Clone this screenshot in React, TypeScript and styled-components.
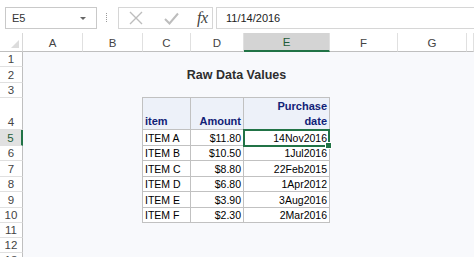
import React from 'react';
import styled, { createGlobalStyle, css } from 'styled-components';

const Global = createGlobalStyle`
  html, body { margin: 0; padding: 0; background: #ffffff; }
  body { font-family: "Liberation Sans", Arial, sans-serif; }
`;

const Window = styled.div`
  display: flex;
  flex-direction: column;
  width: 474px;
  height: 257px;
  overflow: hidden;
  background: #ffffff;
`;

/* ---------- formula bar ---------- */
const FormulaBar = styled.div`
  display: flex;
  align-items: flex-start;
  height: 33px;
  flex: none;
  box-sizing: border-box;
  padding: 7px 0 0 5px;
`;

const NameBox = styled.div`
  width: 92px;
  height: 22px;
  box-sizing: border-box;
  border: 1px solid #c9c9c9;
  display: flex;
  align-items: center;
  justify-content: space-between;
  padding: 0 10px 0 6px;
  font-size: 11px;
  color: #333;
`;

const DropArrow = styled.span`
  width: 0;
  height: 0;
  border-left: 3px solid transparent;
  border-right: 3px solid transparent;
  border-top: 3px solid #666;
`;

const Grip = styled.span`
  width: 0;
  height: 9px;
  margin: 6px 0 0 9px;
  border-left: 1px dotted #9a9a9a;
`;

const FxButtons = styled.div`
  width: 95px;
  height: 22px;
  box-sizing: border-box;
  margin-left: 11px;
  border: 1px solid #d6d6d6;
  display: flex;
  align-items: center;
  padding-left: 10px;
  gap: 0;
`;

const IconSlot = styled.span`
  width: 35px;
  display: flex;
  align-items: center;
  justify-content: flex-start;
`;

const FxLabel = styled.span`
  font-family: "Liberation Serif", "Times New Roman", serif;
  font-style: italic;
  font-size: 16px;
  color: #3f3f3f;
  letter-spacing: -0.5px;
  margin-left: -2px;
`;

const FormulaInput = styled.div`
  flex: 1;
  height: 22px;
  box-sizing: border-box;
  margin-left: 3px;
  border: 1px solid #d6d6d6;
  border-right: none;
  display: flex;
  align-items: center;
  padding-left: 9px;
  font-size: 11px;
  color: #222;
`;

/* ---------- sheet ---------- */
const rowHeights = [19, 15, 16, 15, 32, 16, 15, 16, 15, 16, 15, 15, 15, 15];

const Sheet = styled.div`
  flex: 1;
  display: grid;
  grid-template-columns: 23px 60px 60px 48px 53px 86px 68px 69px 1fr;
  grid-template-rows: ${rowHeights.map((h) => `${h}px`).join(' ')};
  background: #f8f9fc;
  overflow: hidden;
`;

const Corner = styled.div`
  grid-column: 1;
  grid-row: 1;
  background: #fff;
  border-bottom: 1px solid #bfbfbf;
  border-right: 1px solid #d8d8d8;
  display: flex;
  align-items: flex-end;
  justify-content: flex-end;
  padding: 0 3px 3px 0;
`;

const CornerTri = styled.span`
  width: 0;
  height: 0;
  border-left: 8px solid transparent;
  border-bottom: 8px solid #dcdcdc;
`;

const ColHeader = styled.div<{ $col: number; $active?: boolean }>`
  grid-column: ${(p) => p.$col};
  grid-row: 1;
  background: #fff;
  border-bottom: 1px solid #bfbfbf;
  border-right: 1px solid #e0e0e0;
  display: flex;
  align-items: center;
  justify-content: center;
  padding-top: 1px;
  font-size: 11.5px;
  color: #444;
  ${(p) =>
    p.$active &&
    css`
      background: #d4d4d4;
      border-bottom: 2px solid #217346;
      color: #1f5d3a;
    `}
`;

const RowHeader = styled.div<{ $row: number; $active?: boolean }>`
  grid-column: 1;
  grid-row: ${(p) => p.$row};
  background: #fff;
  border-right: 1px solid #bfbfbf;
  border-bottom: 1px solid #e0e0e0;
  display: flex;
  align-items: flex-end;
  justify-content: center;
  font-size: 11.5px;
  line-height: 14px;
  color: #444;
  ${(p) =>
    p.$active &&
    css`
      background: #e1e1e1;
      border-right: 2px solid #217346;
      color: #1f5d3a;
    `}
`;

const Title = styled.div`
  grid-column: 4 / 7;
  grid-row: 3;
  display: flex;
  align-items: center;
  justify-content: center;
  font-weight: bold;
  font-size: 12.5px;
  color: #2e2e2e;
`;

const DataTable = styled.div`
  grid-column: 4 / 7;
  grid-row: 5 / 12;
  display: grid;
  grid-template-columns: 48px 53px 86px;
  grid-template-rows: 32px 16px 15px 16px 15px 16px 15px;
  border-top: 1px solid #c1c1c1;
  border-left: 1px solid #c1c1c1;
  margin: -1px 0 0 -1px;
`;

const Cell = styled.div<{ $head?: boolean; $align?: 'left' | 'right' }>`
  border-right: 1px solid #c1c1c1;
  border-bottom: 1px solid #c1c1c1;
  display: flex;
  align-items: center;
  justify-content: ${(p) => (p.$align === 'right' ? 'flex-end' : 'flex-start')};
  text-align: ${(p) => p.$align ?? 'left'};
  padding: 0 2px;
  font-size: 10.5px;
  color: #000;
  background: #fff;
  white-space: nowrap;
  ${(p) =>
    p.$head &&
    css`
      align-items: flex-end;
      background: #edf1f9;
      color: #112277;
      font-weight: bold;
      font-size: 11px;
      line-height: 15px;
      padding-bottom: 0;
    `}
`;

const Selection = styled.div`
  grid-column: 6;
  grid-row: 6;
  position: relative;
  z-index: 2;
  margin: -1px 0 -1px -1px;
  border: 2px solid #217346;
`;

const FillHandle = styled.span`
  position: absolute;
  right: -4px;
  bottom: -4px;
  width: 5px;
  height: 5px;
  background: #217346;
  border: 1px solid #fff;
`;

const columns = ['A', 'B', 'C', 'D', 'E', 'F', 'G', ''];

const rows = [
  { item: 'ITEM A', amount: '$11.80', date: '14Nov2016' },
  { item: 'ITEM B', amount: '$10.50', date: '1Jul2016' },
  { item: 'ITEM C', amount: '$8.80', date: '22Feb2015' },
  { item: 'ITEM D', amount: '$6.80', date: '1Apr2012' },
  { item: 'ITEM E', amount: '$3.90', date: '3Aug2016' },
  { item: 'ITEM F', amount: '$2.30', date: '2Mar2016' },
];

const CrossIcon = () => (
  <svg width="14" height="14" viewBox="0 0 14 14">
    <path d="M1 1 L13 13 M13 1 L1 13" stroke="#bdbdbd" strokeWidth="1.4" fill="none" />
  </svg>
);

const CheckIcon = () => (
  <svg width="15" height="13" viewBox="0 0 15 13">
    <path d="M1 7 L5.5 11.5 L14 1.5" stroke="#bdbdbd" strokeWidth="2" fill="none" />
  </svg>
);

export default function App() {
  return (
    <>
      <Global />
      <Window>
        <FormulaBar>
          <NameBox>
            <span>E5</span>
            <DropArrow />
          </NameBox>
          <Grip />
          <FxButtons>
            <IconSlot>
              <CrossIcon />
            </IconSlot>
            <IconSlot>
              <CheckIcon />
            </IconSlot>
            <FxLabel>fx</FxLabel>
          </FxButtons>
          <FormulaInput>11/14/2016</FormulaInput>
        </FormulaBar>
        <Sheet>
          <Corner>
            <CornerTri />
          </Corner>
          {columns.map((c, i) => (
            <ColHeader key={i} $col={i + 2} $active={c === 'E'}>
              {c}
            </ColHeader>
          ))}
          {rowHeights.slice(1).map((_, i) => (
            <RowHeader key={i} $row={i + 2} $active={i + 1 === 5}>
              {i + 1}
            </RowHeader>
          ))}
          <Title>Raw Data Values</Title>
          <DataTable>
            <Cell $head>item</Cell>
            <Cell $head $align="right">Amount</Cell>
            <Cell $head $align="right">
              Purchase
              <br />
              date
            </Cell>
            {rows.map((r) => (
              <React.Fragment key={r.item}>
                <Cell>{r.item}</Cell>
                <Cell $align="right">{r.amount}</Cell>
                <Cell $align="right">{r.date}</Cell>
              </React.Fragment>
            ))}
          </DataTable>
          <Selection>
            <FillHandle />
          </Selection>
        </Sheet>
      </Window>
    </>
  );
}
